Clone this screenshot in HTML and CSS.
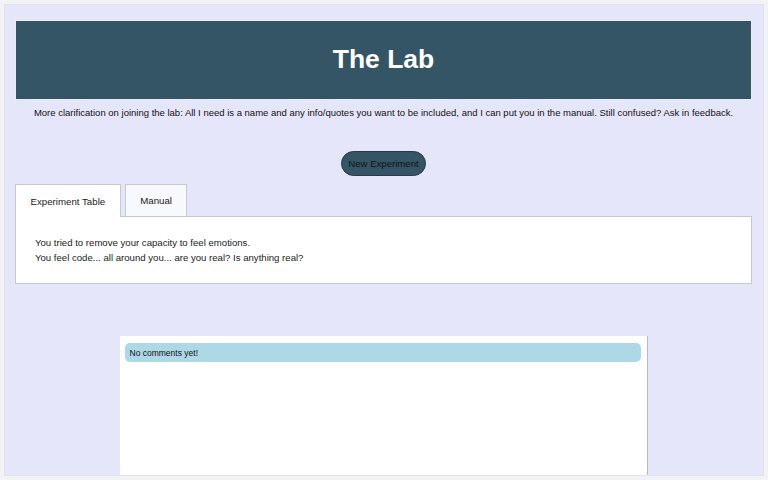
FILE: index.html
```html
<!DOCTYPE html>
<html>
<head>
<meta charset="utf-8">
<link rel="stylesheet" href="styles.css">
</head>
<body>
<div class="app">
  <header class="banner"><h1 class="title">The Lab</h1></header>
  <p class="note">More clarification on joining the lab: All I need is a name and any info/quotes you want to be included, and I can put you in the manual. Still confused? Ask in feedback.</p>
  <div class="actions"><button class="new-btn">New Experiment</button></div>
  <div class="tabs">
    <div class="tab active">Experiment Table</div>
    <div class="tab">Manual</div>
  </div>
  <div class="panel">
    <p class="line">You tried to remove your capacity to feel emotions.</p>
    <p class="line">You feel code... all around you... are you real? Is anything real?</p>
  </div>
  <div class="comments">
    <div class="comment">No comments yet!</div>
  </div>
</div>
</body>
</html>
```
FILE: styles.css
```css
html, body {
  margin: 0;
  padding: 0;
}
body {
  background: #f3f3f5;
  font-family: "Liberation Sans", Arial, sans-serif;
  color: #111;
  padding: 4px;
  height: 480px;
  box-sizing: border-box;
  overflow: hidden;
}
.app {
  background: #e6e6fa;
  height: 472px;
  box-sizing: border-box;
  border: 1px solid #e2e2ec;
  padding: 15px 11px 0 10px;
  overflow: hidden;
}
.banner {
  background: #345565;
  height: 78px;
  display: flex;
  align-items: center;
  justify-content: center;
  border: 1px solid #e9e9f8;
}
.title {
  margin: -2px 0 0;
  color: #fff;
  font-size: 26.5px;
  font-weight: bold;
}
.note {
  margin: 7px 0 0;
  text-align: center;
  font-size: 9.5px;
  line-height: 12px;
}
.actions {
  display: flex;
  justify-content: center;
  margin-top: 32px;
}
.new-btn {
  background: #345565;
  border: 1px solid #233c47;
  border-radius: 13px;
  height: 25px;
  padding: 0 6px;
  font-family: "Liberation Sans", Arial, sans-serif;
  font-size: 9.6px;
  color: #111;
}
.tabs {
  display: flex;
  gap: 4px;
  margin-top: 8px;
}
.tab {
  height: 31px;
  padding: 0 14.5px;
  display: flex;
  align-items: center;
  font-size: 9.7px;
  border: 1px solid #c8c8d0;
  border-bottom: none;
  background: #f8f8ff;
  color: #222;
}
.tab.active {
  background: #fff;
  position: relative;
  z-index: 1;
  height: 32px;
  margin-bottom: -1px;
}
.panel {
  background: #fff;
  border: 1px solid #c8c8d0;
  height: 68px;
  box-sizing: border-box;
  padding: 18px 19px;
}
.line {
  margin: 0;
  font-size: 9.6px;
  line-height: 15px;
  color: #222;
}
.comments {
  width: 528px;
  margin: 52px auto 0;
  background: #fff;
  border-right: 1px solid #b8b8c0;
  height: 200px;
  padding: 7px 6px 0 5px;
  box-sizing: border-box;
}
.comment {
  background: #add8e6;
  border-radius: 5px;
  height: 19px;
  display: flex;
  align-items: center;
  padding: 0 5px;
  font-size: 8.5px;
  color: #111;
}
```
